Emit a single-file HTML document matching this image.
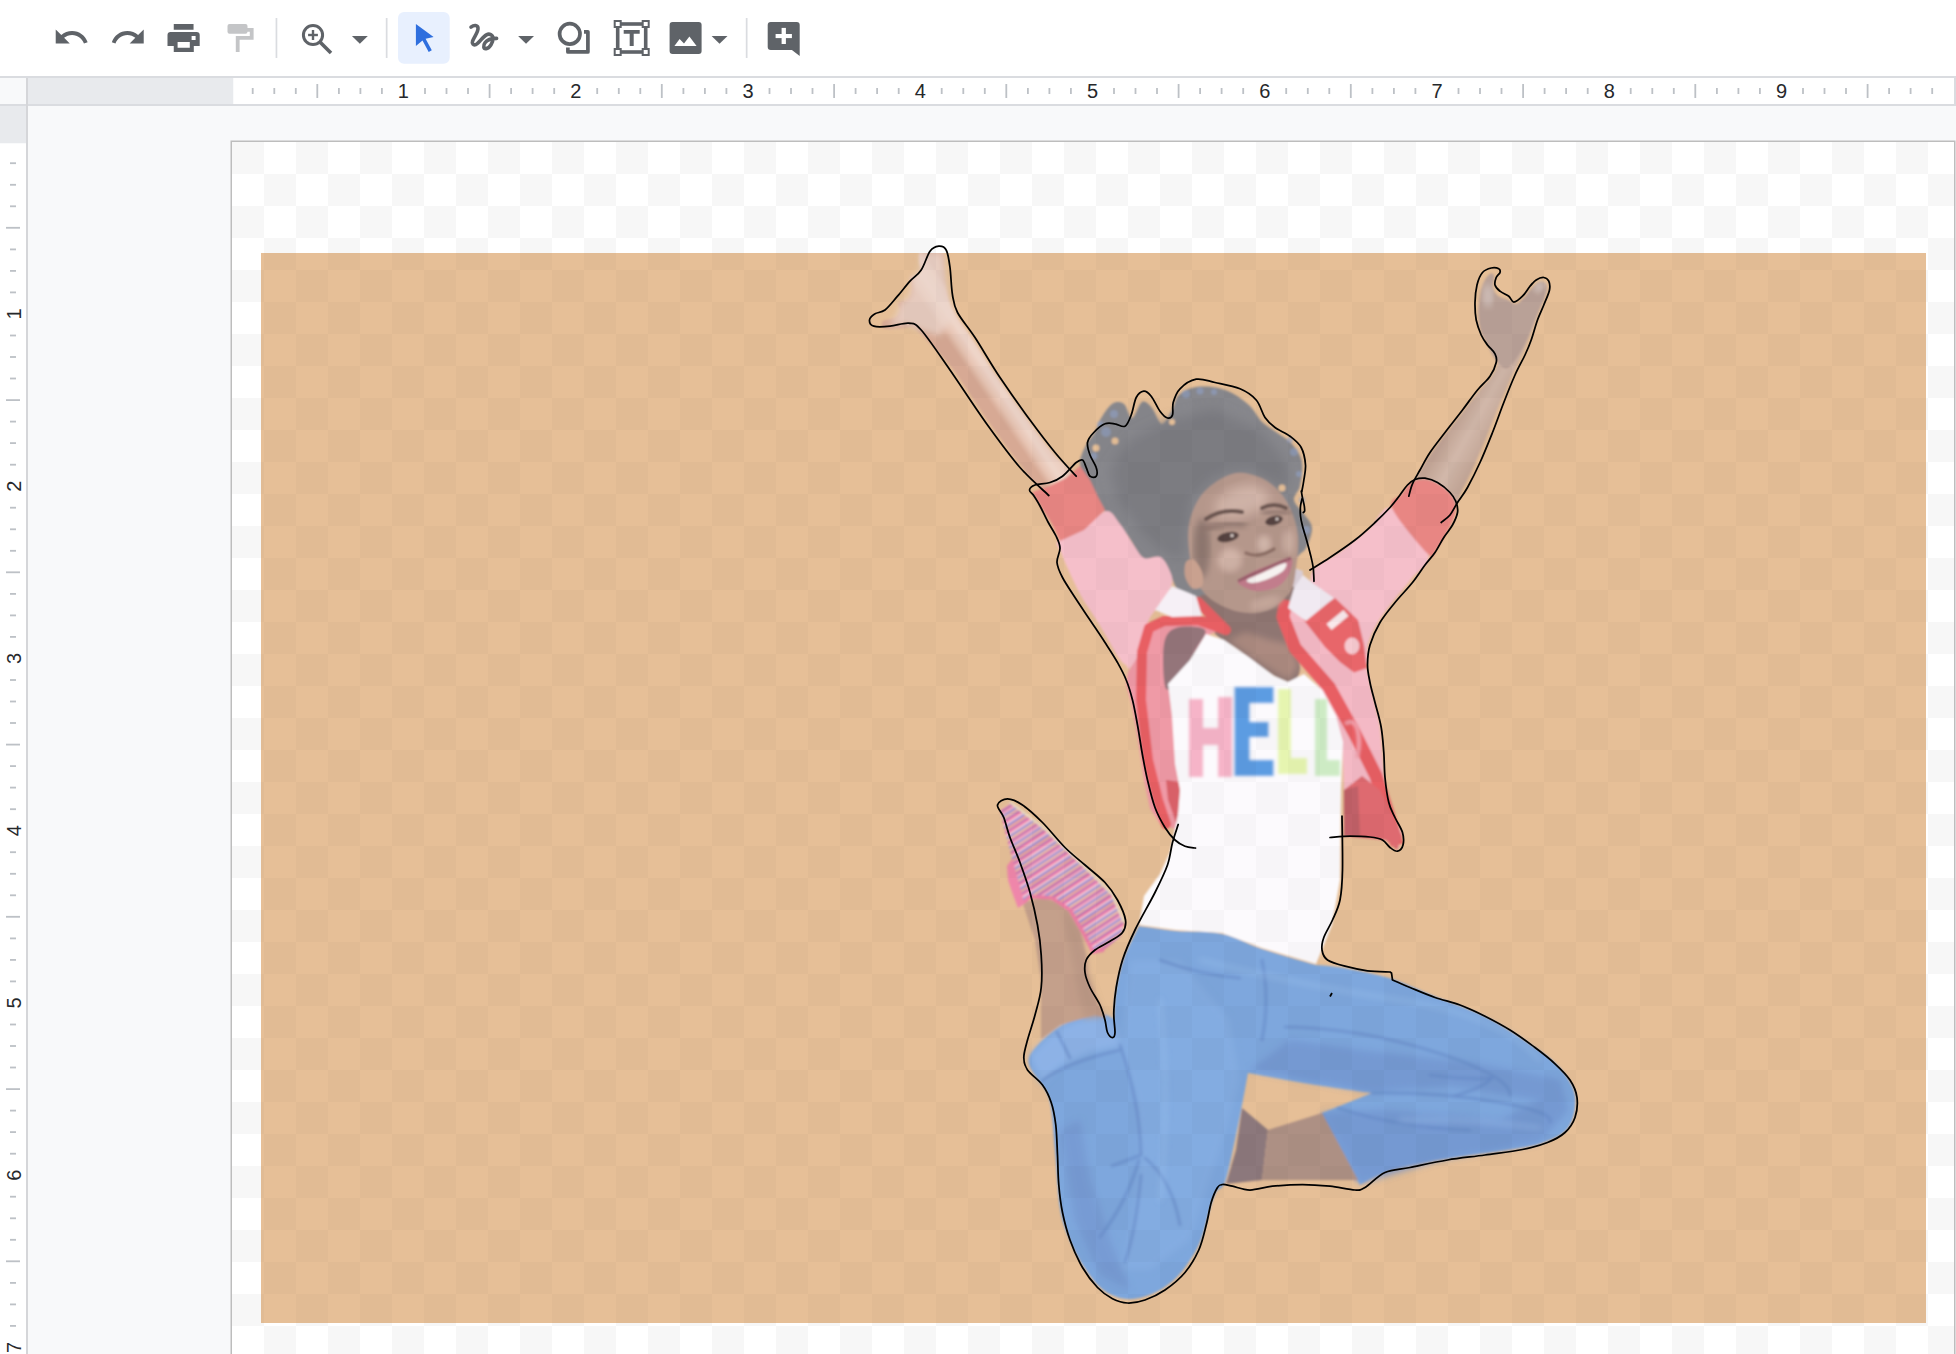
<!DOCTYPE html>
<html><head><meta charset="utf-8"><title>Drawing</title>
<style>
html,body{margin:0;padding:0;background:#fff;}
body{width:1956px;height:1354px;overflow:hidden;position:relative;font-family:"Liberation Sans",sans-serif;}
svg{position:absolute;left:0;top:0;display:block}
text{font-family:"Liberation Sans",sans-serif;}
</style></head><body>
<svg width="1956" height="1354" viewBox="0 0 1956 1354">
<defs>
<pattern id="chk" x="232" y="142" width="64" height="64" patternUnits="userSpaceOnUse">
<rect width="64" height="64" fill="#ffffff"/>
<rect width="32" height="32" fill="#f7f7f7"/><rect x="32" y="32" width="32" height="32" fill="#f7f7f7"/>
</pattern>
<pattern id="chk2" x="232" y="142" width="64" height="64" patternUnits="userSpaceOnUse">
<rect width="32" height="32" fill="#000" fill-opacity="0.019"/><rect x="32" y="32" width="32" height="32" fill="#000" fill-opacity="0.019"/>
</pattern>
</defs>
<!-- workspace bg -->
<rect x="0" y="0" width="1956" height="1354" fill="#ffffff"/>
<rect x="27" y="105" width="1929" height="1249" fill="#f8f9fa"/>
<!-- top ruler -->
<rect x="0" y="76" width="1956" height="2" fill="#dadce0"/>
<rect x="0" y="104" width="1956" height="2" fill="#dadce0"/>
<rect x="0" y="78" width="26" height="26" fill="#f8f9fa"/>
<rect x="27" y="78" width="206.5" height="26" fill="#e8eaed"/>
<rect x="233.5" y="78" width="1720.5" height="26" fill="#ffffff"/>
<rect x="1954" y="78" width="2" height="26" fill="#dadce0"/>
<rect x="251.8" y="88" width="1.8" height="6" fill="#bdc1c6"/>
<rect x="273.4" y="88" width="1.8" height="6" fill="#bdc1c6"/>
<rect x="294.9" y="88" width="1.8" height="6" fill="#bdc1c6"/>
<rect x="316.4" y="84" width="1.8" height="14" fill="#bdc1c6"/>
<rect x="338.0" y="88" width="1.8" height="6" fill="#bdc1c6"/>
<rect x="359.5" y="88" width="1.8" height="6" fill="#bdc1c6"/>
<rect x="381.0" y="88" width="1.8" height="6" fill="#bdc1c6"/>
<text x="403.4" y="98" text-anchor="middle" font-size="20" fill="#26282b">1</text>
<rect x="424.1" y="88" width="1.8" height="6" fill="#bdc1c6"/>
<rect x="445.6" y="88" width="1.8" height="6" fill="#bdc1c6"/>
<rect x="467.1" y="88" width="1.8" height="6" fill="#bdc1c6"/>
<rect x="488.7" y="84" width="1.8" height="14" fill="#bdc1c6"/>
<rect x="510.2" y="88" width="1.8" height="6" fill="#bdc1c6"/>
<rect x="531.7" y="88" width="1.8" height="6" fill="#bdc1c6"/>
<rect x="553.3" y="88" width="1.8" height="6" fill="#bdc1c6"/>
<text x="575.7" y="98" text-anchor="middle" font-size="20" fill="#26282b">2</text>
<rect x="596.3" y="88" width="1.8" height="6" fill="#bdc1c6"/>
<rect x="617.9" y="88" width="1.8" height="6" fill="#bdc1c6"/>
<rect x="639.4" y="88" width="1.8" height="6" fill="#bdc1c6"/>
<rect x="660.9" y="84" width="1.8" height="14" fill="#bdc1c6"/>
<rect x="682.5" y="88" width="1.8" height="6" fill="#bdc1c6"/>
<rect x="704.0" y="88" width="1.8" height="6" fill="#bdc1c6"/>
<rect x="725.5" y="88" width="1.8" height="6" fill="#bdc1c6"/>
<text x="748.0" y="98" text-anchor="middle" font-size="20" fill="#26282b">3</text>
<rect x="768.6" y="88" width="1.8" height="6" fill="#bdc1c6"/>
<rect x="790.1" y="88" width="1.8" height="6" fill="#bdc1c6"/>
<rect x="811.6" y="88" width="1.8" height="6" fill="#bdc1c6"/>
<rect x="833.2" y="84" width="1.8" height="14" fill="#bdc1c6"/>
<rect x="854.7" y="88" width="1.8" height="6" fill="#bdc1c6"/>
<rect x="876.2" y="88" width="1.8" height="6" fill="#bdc1c6"/>
<rect x="897.8" y="88" width="1.8" height="6" fill="#bdc1c6"/>
<text x="920.2" y="98" text-anchor="middle" font-size="20" fill="#26282b">4</text>
<rect x="940.8" y="88" width="1.8" height="6" fill="#bdc1c6"/>
<rect x="962.4" y="88" width="1.8" height="6" fill="#bdc1c6"/>
<rect x="983.9" y="88" width="1.8" height="6" fill="#bdc1c6"/>
<rect x="1005.4" y="84" width="1.8" height="14" fill="#bdc1c6"/>
<rect x="1027.0" y="88" width="1.8" height="6" fill="#bdc1c6"/>
<rect x="1048.5" y="88" width="1.8" height="6" fill="#bdc1c6"/>
<rect x="1070.0" y="88" width="1.8" height="6" fill="#bdc1c6"/>
<text x="1092.5" y="98" text-anchor="middle" font-size="20" fill="#26282b">5</text>
<rect x="1113.1" y="88" width="1.8" height="6" fill="#bdc1c6"/>
<rect x="1134.6" y="88" width="1.8" height="6" fill="#bdc1c6"/>
<rect x="1156.1" y="88" width="1.8" height="6" fill="#bdc1c6"/>
<rect x="1177.7" y="84" width="1.8" height="14" fill="#bdc1c6"/>
<rect x="1199.2" y="88" width="1.8" height="6" fill="#bdc1c6"/>
<rect x="1220.7" y="88" width="1.8" height="6" fill="#bdc1c6"/>
<rect x="1242.3" y="88" width="1.8" height="6" fill="#bdc1c6"/>
<text x="1264.7" y="98" text-anchor="middle" font-size="20" fill="#26282b">6</text>
<rect x="1285.3" y="88" width="1.8" height="6" fill="#bdc1c6"/>
<rect x="1306.9" y="88" width="1.8" height="6" fill="#bdc1c6"/>
<rect x="1328.4" y="88" width="1.8" height="6" fill="#bdc1c6"/>
<rect x="1349.9" y="84" width="1.8" height="14" fill="#bdc1c6"/>
<rect x="1371.5" y="88" width="1.8" height="6" fill="#bdc1c6"/>
<rect x="1393.0" y="88" width="1.8" height="6" fill="#bdc1c6"/>
<rect x="1414.5" y="88" width="1.8" height="6" fill="#bdc1c6"/>
<text x="1437.0" y="98" text-anchor="middle" font-size="20" fill="#26282b">7</text>
<rect x="1457.6" y="88" width="1.8" height="6" fill="#bdc1c6"/>
<rect x="1479.1" y="88" width="1.8" height="6" fill="#bdc1c6"/>
<rect x="1500.6" y="88" width="1.8" height="6" fill="#bdc1c6"/>
<rect x="1522.2" y="84" width="1.8" height="14" fill="#bdc1c6"/>
<rect x="1543.7" y="88" width="1.8" height="6" fill="#bdc1c6"/>
<rect x="1565.2" y="88" width="1.8" height="6" fill="#bdc1c6"/>
<rect x="1586.8" y="88" width="1.8" height="6" fill="#bdc1c6"/>
<text x="1609.2" y="98" text-anchor="middle" font-size="20" fill="#26282b">8</text>
<rect x="1629.8" y="88" width="1.8" height="6" fill="#bdc1c6"/>
<rect x="1651.4" y="88" width="1.8" height="6" fill="#bdc1c6"/>
<rect x="1672.9" y="88" width="1.8" height="6" fill="#bdc1c6"/>
<rect x="1694.4" y="84" width="1.8" height="14" fill="#bdc1c6"/>
<rect x="1716.0" y="88" width="1.8" height="6" fill="#bdc1c6"/>
<rect x="1737.5" y="88" width="1.8" height="6" fill="#bdc1c6"/>
<rect x="1759.0" y="88" width="1.8" height="6" fill="#bdc1c6"/>
<text x="1781.5" y="98" text-anchor="middle" font-size="20" fill="#26282b">9</text>
<rect x="1802.1" y="88" width="1.8" height="6" fill="#bdc1c6"/>
<rect x="1823.6" y="88" width="1.8" height="6" fill="#bdc1c6"/>
<rect x="1845.1" y="88" width="1.8" height="6" fill="#bdc1c6"/>
<rect x="1866.7" y="84" width="1.8" height="14" fill="#bdc1c6"/>
<rect x="1888.2" y="88" width="1.8" height="6" fill="#bdc1c6"/>
<rect x="1909.7" y="88" width="1.8" height="6" fill="#bdc1c6"/>
<rect x="1931.3" y="88" width="1.8" height="6" fill="#bdc1c6"/>
<!-- left ruler -->
<rect x="0" y="106" width="26" height="37.5" fill="#e8eaed"/>
<rect x="0" y="143.5" width="26" height="1210.5" fill="#ffffff"/>
<rect x="26" y="78" width="2" height="1276" fill="#d5d6d9"/>
<rect x="10" y="162.3" width="6" height="1.8" fill="#bdc1c6"/>
<rect x="10" y="183.9" width="6" height="1.8" fill="#bdc1c6"/>
<rect x="10" y="205.4" width="6" height="1.8" fill="#bdc1c6"/>
<rect x="6" y="226.9" width="14" height="1.8" fill="#bdc1c6"/>
<rect x="10" y="248.5" width="6" height="1.8" fill="#bdc1c6"/>
<rect x="10" y="270.0" width="6" height="1.8" fill="#bdc1c6"/>
<rect x="10" y="291.5" width="6" height="1.8" fill="#bdc1c6"/>
<text transform="translate(20.5,313.9) rotate(-90)" text-anchor="middle" font-size="20" fill="#26282b">1</text>
<rect x="10" y="334.6" width="6" height="1.8" fill="#bdc1c6"/>
<rect x="10" y="356.1" width="6" height="1.8" fill="#bdc1c6"/>
<rect x="10" y="377.6" width="6" height="1.8" fill="#bdc1c6"/>
<rect x="6" y="399.2" width="14" height="1.8" fill="#bdc1c6"/>
<rect x="10" y="420.7" width="6" height="1.8" fill="#bdc1c6"/>
<rect x="10" y="442.2" width="6" height="1.8" fill="#bdc1c6"/>
<rect x="10" y="463.8" width="6" height="1.8" fill="#bdc1c6"/>
<text transform="translate(20.5,486.2) rotate(-90)" text-anchor="middle" font-size="20" fill="#26282b">2</text>
<rect x="10" y="506.8" width="6" height="1.8" fill="#bdc1c6"/>
<rect x="10" y="528.4" width="6" height="1.8" fill="#bdc1c6"/>
<rect x="10" y="549.9" width="6" height="1.8" fill="#bdc1c6"/>
<rect x="6" y="571.4" width="14" height="1.8" fill="#bdc1c6"/>
<rect x="10" y="593.0" width="6" height="1.8" fill="#bdc1c6"/>
<rect x="10" y="614.5" width="6" height="1.8" fill="#bdc1c6"/>
<rect x="10" y="636.0" width="6" height="1.8" fill="#bdc1c6"/>
<text transform="translate(20.5,658.5) rotate(-90)" text-anchor="middle" font-size="20" fill="#26282b">3</text>
<rect x="10" y="679.1" width="6" height="1.8" fill="#bdc1c6"/>
<rect x="10" y="700.6" width="6" height="1.8" fill="#bdc1c6"/>
<rect x="10" y="722.1" width="6" height="1.8" fill="#bdc1c6"/>
<rect x="6" y="743.7" width="14" height="1.8" fill="#bdc1c6"/>
<rect x="10" y="765.2" width="6" height="1.8" fill="#bdc1c6"/>
<rect x="10" y="786.7" width="6" height="1.8" fill="#bdc1c6"/>
<rect x="10" y="808.3" width="6" height="1.8" fill="#bdc1c6"/>
<text transform="translate(20.5,830.7) rotate(-90)" text-anchor="middle" font-size="20" fill="#26282b">4</text>
<rect x="10" y="851.3" width="6" height="1.8" fill="#bdc1c6"/>
<rect x="10" y="872.9" width="6" height="1.8" fill="#bdc1c6"/>
<rect x="10" y="894.4" width="6" height="1.8" fill="#bdc1c6"/>
<rect x="6" y="915.9" width="14" height="1.8" fill="#bdc1c6"/>
<rect x="10" y="937.5" width="6" height="1.8" fill="#bdc1c6"/>
<rect x="10" y="959.0" width="6" height="1.8" fill="#bdc1c6"/>
<rect x="10" y="980.5" width="6" height="1.8" fill="#bdc1c6"/>
<text transform="translate(20.5,1003.0) rotate(-90)" text-anchor="middle" font-size="20" fill="#26282b">5</text>
<rect x="10" y="1023.6" width="6" height="1.8" fill="#bdc1c6"/>
<rect x="10" y="1045.1" width="6" height="1.8" fill="#bdc1c6"/>
<rect x="10" y="1066.6" width="6" height="1.8" fill="#bdc1c6"/>
<rect x="6" y="1088.2" width="14" height="1.8" fill="#bdc1c6"/>
<rect x="10" y="1109.7" width="6" height="1.8" fill="#bdc1c6"/>
<rect x="10" y="1131.2" width="6" height="1.8" fill="#bdc1c6"/>
<rect x="10" y="1152.8" width="6" height="1.8" fill="#bdc1c6"/>
<text transform="translate(20.5,1175.2) rotate(-90)" text-anchor="middle" font-size="20" fill="#26282b">6</text>
<rect x="10" y="1195.8" width="6" height="1.8" fill="#bdc1c6"/>
<rect x="10" y="1217.4" width="6" height="1.8" fill="#bdc1c6"/>
<rect x="10" y="1238.9" width="6" height="1.8" fill="#bdc1c6"/>
<rect x="6" y="1260.4" width="14" height="1.8" fill="#bdc1c6"/>
<rect x="10" y="1282.0" width="6" height="1.8" fill="#bdc1c6"/>
<rect x="10" y="1303.5" width="6" height="1.8" fill="#bdc1c6"/>
<rect x="10" y="1325.0" width="6" height="1.8" fill="#bdc1c6"/>
<text transform="translate(20.5,1347.5) rotate(-90)" text-anchor="middle" font-size="20" fill="#26282b">7</text>
<rect x="10" y="1368.1" width="6" height="1.8" fill="#bdc1c6"/>
<!-- canvas -->
<rect x="230.5" y="140.5" width="1725" height="1240" fill="#bdbdbd"/>
<rect x="232" y="142" width="1722" height="1240" fill="url(#chk)"/>
<rect x="261" y="253" width="1665" height="1070" fill="#e6bf97"/>
<defs><filter id="soft" x="-5%" y="-5%" width="110%" height="110%"><feGaussianBlur stdDeviation="1.1"/></filter><filter id="soft3" x="-10%" y="-10%" width="120%" height="120%"><feGaussianBlur stdDeviation="3"/></filter><filter id="soft6" x="-20%" y="-20%" width="140%" height="140%"><feGaussianBlur stdDeviation="6"/></filter><linearGradient id="armL" gradientUnits="userSpaceOnUse" x1="985" y1="395" x2="1010" y2="378"><stop offset="0" stop-color="#d7a994"/><stop offset=".22" stop-color="#e7c4b3"/><stop offset=".5" stop-color="#efd6ca"/><stop offset=".85" stop-color="#ebccbd"/><stop offset="1" stop-color="#dcb4a1"/></linearGradient><linearGradient id="armR" gradientUnits="userSpaceOnUse" x1="1452" y1="425" x2="1488" y2="445"><stop offset="0" stop-color="#c0a394"/><stop offset=".45" stop-color="#d2b8aa"/><stop offset="1" stop-color="#c2a596"/></linearGradient><pattern id="stripes" width="30" height="30" patternUnits="userSpaceOnUse" patternTransform="rotate(-33)"><rect width="30" height="30" fill="#f0729f"/><rect y="0" width="30" height="1.8" fill="#86a2e0"/><rect y="2.600" width="30" height="1.2" fill="#f8eeb0"/><rect y="4.600" width="30" height="1.300" fill="#9a86c8"/><rect y="8.400" width="30" height="1.300" fill="#faf6f6"/><rect y="10.400" width="30" height="1.800" fill="#7d9be0"/><rect y="13.000" width="30" height="1.200" fill="#f4cf90"/><rect y="15.000" width="30" height="1.200" fill="#a88ccc"/><rect y="18.600" width="30" height="1.300" fill="#f9f3f4"/><rect y="20.600" width="30" height="1.700" fill="#7aa6e4"/><rect y="23.000" width="30" height="1.200" fill="#f6eaa6"/><rect y="25.400" width="30" height="1.200" fill="#a08ac8"/><rect y="28.300" width="30" height="1.000" fill="#f7f1f2"/></pattern></defs>
<clipPath id="imgclip"><rect x="261" y="253" width="1665" height="1070"/></clipPath><g clip-path="url(#imgclip)"><g filter="url(#soft)">
<path d="M1092.0,500.0 C1088.0,494.3 1086.0,486.3 1084.0,480.0 C1082.0,473.7 1079.7,467.8 1080.0,462.0 C1080.3,456.2 1083.5,450.0 1086.0,445.0 C1088.5,440.0 1092.7,436.2 1095.0,432.0 C1097.3,427.8 1097.2,424.7 1100.0,420.0 C1102.8,415.3 1108.0,406.7 1112.0,404.0 C1116.0,401.3 1120.7,401.7 1124.0,404.0 C1127.3,406.3 1129.0,418.3 1132.0,418.0 C1135.0,417.7 1138.7,403.7 1142.0,402.0 C1145.3,400.3 1148.7,404.3 1152.0,408.0 C1155.3,411.7 1158.7,423.7 1162.0,424.0 C1165.3,424.3 1169.3,414.7 1172.0,410.0 C1174.7,405.3 1174.7,399.7 1178.0,396.0 C1181.3,392.3 1186.3,389.5 1192.0,388.0 C1197.7,386.5 1205.3,386.2 1212.0,387.0 C1218.7,387.8 1225.7,389.8 1232.0,393.0 C1238.3,396.2 1245.0,401.2 1250.0,406.0 C1255.0,410.8 1257.7,417.7 1262.0,422.0 C1266.3,426.3 1271.0,428.3 1276.0,432.0 C1281.0,435.7 1287.7,439.0 1292.0,444.0 C1296.3,449.0 1300.7,455.0 1302.0,462.0 C1303.3,469.0 1301.3,479.7 1300.0,486.0 C1298.7,492.3 1293.3,495.3 1294.0,500.0 C1294.7,504.7 1301.0,509.3 1304.0,514.0 C1307.0,518.7 1311.7,522.3 1312.0,528.0 C1312.3,533.7 1308.7,542.7 1306.0,548.0 C1303.3,553.3 1300.3,551.3 1296.0,560.0 C1291.7,568.7 1291.0,590.0 1280.0,600.0 C1269.0,610.0 1244.2,620.0 1230.0,620.0 C1215.8,620.0 1203.7,605.0 1195.0,600.0 C1186.3,595.0 1182.5,595.0 1178.0,590.0 C1173.5,585.0 1171.7,575.3 1168.0,570.0 C1164.3,564.7 1160.3,560.0 1156.0,558.0 C1151.7,556.0 1146.7,561.7 1142.0,558.0 C1137.3,554.3 1133.7,543.3 1128.0,536.0 C1122.3,528.7 1114.0,520.0 1108.0,514.0 C1102.0,508.0 1096.0,505.7 1092.0,500.0Z" fill="#87878c" />
<path d="M1110,470 L1130,440 L1170,420 L1215,410 L1260,430 L1285,460 L1290,490 L1250,470 L1215,475 L1190,500 L1185,560 L1165,555 L1140,530 L1118,500z" fill="#7b7b81" filter="url(#soft6)"/>
<circle cx="1106" cy="432" r="5" fill="#8fa3cc" opacity=".55"/>
<circle cx="1114" cy="414" r="4" fill="#8fa3cc" opacity=".55"/>
<circle cx="1100" cy="424" r="3" fill="#8fa3cc" opacity=".55"/>
<circle cx="1186" cy="394" r="4" fill="#8fa3cc" opacity=".55"/>
<circle cx="1200" cy="391" r="3.5" fill="#8fa3cc" opacity=".55"/>
<circle cx="1214" cy="392" r="3" fill="#8fa3cc" opacity=".55"/>
<circle cx="1294" cy="452" r="4" fill="#8fa3cc" opacity=".55"/>
<circle cx="1299" cy="474" r="3" fill="#8fa3cc" opacity=".55"/>
<circle cx="1306" cy="530" r="4" fill="#8fa3cc" opacity=".55"/>
<circle cx="1094" cy="456" r="3.5" fill="#8fa3cc" opacity=".55"/>
<circle cx="1290" cy="440" r="3" fill="#8fa3cc" opacity=".55"/>
<circle cx="1302" cy="500" r="3" fill="#8fa3cc" opacity=".55"/>
<circle cx="1096" cy="448" r="3.5" fill="#e6bf97"/>
<circle cx="1115" cy="441" r="3.5" fill="#e6bf97"/>
<circle cx="1172" cy="422" r="3" fill="#e6bf97"/>
<circle cx="1282" cy="488" r="3.5" fill="#e6bf97"/>
<path d="M1046.0,492.0 C1036.3,489.0 1029.7,475.8 1020.0,464.0 C1010.3,452.2 999.3,437.0 988.0,421.0 C976.7,405.0 962.2,381.5 952.0,368.0 C941.8,354.5 932.0,345.9 926.5,340.0 C921.0,334.1 921.5,334.4 919.0,332.3 C916.5,330.2 914.6,327.7 911.7,327.1 C908.8,326.5 906.0,328.4 901.4,328.6 C896.8,328.9 887.5,329.8 884.4,328.6 C881.3,327.4 881.0,323.1 882.9,321.2 C884.8,319.3 892.7,319.3 895.5,317.5 C898.3,315.7 899.4,312.6 899.9,310.2 C900.4,307.8 897.0,304.7 898.4,302.8 C899.8,300.9 905.8,300.9 908.0,299.0 C910.2,297.1 911.2,294.1 911.7,291.7 C912.2,289.2 911.2,286.8 911.0,284.3 C910.8,281.9 909.0,278.6 910.2,277.0 C911.4,275.4 916.4,275.9 918.3,274.7 C920.1,273.4 921.2,271.6 921.3,269.5 C921.4,267.4 919.0,265.2 919.0,262.0 C919.0,258.8 917.5,252.0 921.3,250.0 C925.1,248.0 938.0,245.5 942.0,250.0 C946.0,254.5 943.9,268.8 945.0,277.0 C946.1,285.2 946.9,292.9 948.6,299.0 C950.3,305.1 951.4,307.4 955.3,313.9 C959.2,320.4 964.9,327.3 972.0,338.0 C979.1,348.7 988.7,364.3 998.0,378.0 C1007.3,391.7 1019.0,407.7 1028.0,420.0 C1037.0,432.3 1043.7,441.7 1052.0,452.0 C1060.3,462.3 1079.0,475.3 1078.0,482.0 C1077.0,488.7 1055.7,495.0 1046.0,492.0Z" fill="url(#armL)" />
<path d="M921,253 L942,253 L948,296 L956,314 L940,336 L920,330 L905,324 L888,326 L897,314 L900,303 L910,296 L911,280 L920,270z" fill="#ebd6cc" opacity=".75" filter="url(#soft3)"/>
<path d="M1410.0,494.0 C1404.0,489.3 1412.3,485.0 1416.0,478.0 C1419.7,471.0 1426.7,459.8 1432.0,452.0 C1437.3,444.2 1442.3,438.3 1448.0,431.0 C1453.7,423.7 1460.7,414.8 1466.0,408.0 C1471.3,401.2 1475.7,395.3 1480.0,390.0 C1484.3,384.7 1489.0,380.7 1492.0,376.0 C1495.0,371.3 1497.7,366.0 1498.0,362.0 C1498.3,358.0 1496.0,355.3 1494.0,352.0 C1492.0,348.7 1488.3,346.0 1486.0,342.0 C1483.7,338.0 1481.3,333.0 1480.0,328.0 C1478.7,323.0 1478.0,317.3 1478.0,312.0 C1478.0,306.7 1479.0,301.0 1480.0,296.0 C1481.0,291.0 1482.3,285.7 1484.0,282.0 C1485.7,278.3 1488.3,275.0 1490.0,274.0 C1491.7,273.0 1493.5,273.7 1494.0,276.0 C1494.5,278.3 1492.3,284.7 1493.0,288.0 C1493.7,291.3 1495.5,294.0 1498.0,296.0 C1500.5,298.0 1505.0,298.7 1508.0,300.0 C1511.0,301.3 1513.3,304.3 1516.0,304.0 C1518.7,303.7 1521.3,300.7 1524.0,298.0 C1526.7,295.3 1529.3,290.7 1532.0,288.0 C1534.7,285.3 1537.7,282.7 1540.0,282.0 C1542.3,281.3 1545.0,282.0 1546.0,284.0 C1547.0,286.0 1547.0,290.0 1546.0,294.0 C1545.0,298.0 1542.3,302.0 1540.0,308.0 C1537.7,314.0 1535.0,322.3 1532.0,330.0 C1529.0,337.7 1525.7,345.7 1522.0,354.0 C1518.3,362.3 1514.0,371.0 1510.0,380.0 C1506.0,389.0 1502.0,398.3 1498.0,408.0 C1494.0,417.7 1490.0,428.3 1486.0,438.0 C1482.0,447.7 1478.0,457.3 1474.0,466.0 C1470.0,474.7 1465.7,483.3 1462.0,490.0 C1458.3,496.7 1460.7,505.3 1452.0,506.0 C1443.3,506.7 1416.0,498.7 1410.0,494.0Z" fill="url(#armR)" />
<path d="M1480.0,296.0 C1480.7,288.7 1482.3,285.7 1484.0,282.0 C1485.7,278.3 1488.3,275.0 1490.0,274.0 C1491.7,273.0 1493.5,273.7 1494.0,276.0 C1494.5,278.3 1492.3,284.7 1493.0,288.0 C1493.7,291.3 1495.5,294.0 1498.0,296.0 C1500.5,298.0 1505.0,298.7 1508.0,300.0 C1511.0,301.3 1513.3,304.3 1516.0,304.0 C1518.7,303.7 1521.3,300.7 1524.0,298.0 C1526.7,295.3 1529.3,290.7 1532.0,288.0 C1534.7,285.3 1537.7,282.7 1540.0,282.0 C1542.3,281.3 1545.0,282.0 1546.0,284.0 C1547.0,286.0 1547.7,288.3 1546.0,294.0 C1544.3,299.7 1539.7,309.3 1536.0,318.0 C1532.3,326.7 1528.7,337.7 1524.0,346.0 C1519.3,354.3 1512.7,365.7 1508.0,368.0 C1503.3,370.3 1499.7,364.3 1496.0,360.0 C1492.3,355.7 1488.7,347.7 1486.0,342.0 C1483.3,336.3 1481.0,333.7 1480.0,326.0 C1479.0,318.3 1479.3,303.3 1480.0,296.0Z" fill="#b9a197" />
<ellipse cx="1539" cy="287" rx="4" ry="6" fill="#d9c8c2" filter="url(#soft3)" transform="rotate(35 1539 287)"/>
<ellipse cx="1488" cy="296" rx="5" ry="12" fill="#cdbcb6" filter="url(#soft3)"/>
<path d="M1058.0,541.0 C1061.5,537.3 1074.0,535.0 1082.0,530.0 C1090.0,525.0 1099.7,512.0 1106.0,511.0 C1112.3,510.0 1115.5,518.5 1120.0,524.0 C1124.5,529.5 1129.0,538.3 1133.0,544.0 C1137.0,549.7 1139.5,555.8 1144.0,558.0 C1148.5,560.2 1155.8,555.2 1160.0,557.0 C1164.2,558.8 1167.0,564.5 1169.0,569.0 C1171.0,573.5 1173.5,578.2 1172.0,584.0 C1170.5,589.8 1164.0,597.7 1160.0,604.0 C1156.0,610.3 1151.0,614.3 1148.0,622.0 C1145.0,629.7 1145.0,642.3 1142.0,650.0 C1139.0,657.7 1132.7,665.5 1130.0,668.0 C1127.3,670.5 1127.8,666.7 1126.0,665.0 C1124.2,663.3 1123.7,665.1 1119.0,658.0 C1114.3,650.9 1104.2,632.5 1098.0,622.4 C1091.8,612.3 1087.0,606.5 1082.0,597.6 C1077.0,588.7 1071.5,576.6 1068.0,569.0 C1064.5,561.4 1062.7,556.7 1061.0,552.0 C1059.3,547.3 1054.5,544.7 1058.0,541.0Z" fill="#f5bfca" />
<path d="M1032.0,492.0 L1050.0,486.0 L1066.0,478.0 L1080.0,466.0 L1090.0,480.0 L1098.0,497.0 L1105.0,510.0 L1084.0,530.0 L1060.0,541.0 L1052.0,524.0 L1042.0,508.0Z" fill="#e88683" />
<path d="M1312.0,572.0 C1315.7,564.0 1330.7,559.0 1340.0,552.0 C1349.3,545.0 1359.3,537.3 1368.0,530.0 C1376.7,522.7 1382.0,504.0 1392.0,508.0 C1402.0,512.0 1424.7,542.3 1428.0,554.0 C1431.3,565.7 1417.7,570.3 1412.0,578.0 C1406.3,585.7 1399.7,592.7 1394.0,600.0 C1388.3,607.3 1382.3,614.7 1378.0,622.0 C1373.7,629.3 1370.0,637.0 1368.0,644.0 C1366.0,651.0 1370.7,664.7 1366.0,664.0 C1361.3,663.3 1348.0,650.7 1340.0,640.0 C1332.0,629.3 1322.7,611.3 1318.0,600.0 C1313.3,588.7 1308.3,580.0 1312.0,572.0Z" fill="#f5bfca" />
<path d="M1392.0,508.0 C1387.7,498.0 1398.7,498.3 1402.0,494.0 C1405.3,489.7 1407.7,484.3 1412.0,482.0 C1416.3,479.7 1422.7,479.0 1428.0,480.0 C1433.3,481.0 1439.7,484.7 1444.0,488.0 C1448.3,491.3 1452.2,495.7 1454.0,500.0 C1455.8,504.3 1456.3,508.3 1455.0,514.0 C1453.7,519.7 1449.2,528.0 1446.0,534.0 C1442.8,540.0 1439.0,546.7 1436.0,550.0 C1433.0,553.3 1435.3,561.0 1428.0,554.0 C1420.7,547.0 1396.3,518.0 1392.0,508.0Z" fill="#e88683" />
<path d="M1288.0,566.0 L1303.0,571.0 L1301.0,602.0 L1290.0,608.0Z" fill="#ddd2da" />
<path d="M1200.0,596.0 C1202.7,591.0 1218.3,601.3 1230.0,602.0 C1241.7,602.7 1259.2,602.3 1270.0,600.0 C1280.8,597.7 1291.3,581.3 1295.0,588.0 C1298.7,594.7 1291.2,626.7 1292.0,640.0 C1292.8,653.3 1300.3,661.0 1300.0,668.0 C1299.7,675.0 1296.3,682.0 1290.0,682.0 C1283.7,682.0 1271.0,673.7 1262.0,668.0 C1253.0,662.3 1244.0,654.0 1236.0,648.0 C1228.0,642.0 1220.0,640.7 1214.0,632.0 C1208.0,623.3 1197.3,601.0 1200.0,596.0Z" fill="#8f7672" />
<path d="M1228,640 L1262,664 L1288,680 L1298,666 L1290,644 L1270,640 L1246,632z" fill="#ac8a80" filter="url(#soft3)"/>
<path d="M1170.0,684.0 L1204.0,636.0 L1222.0,640.0 L1206.0,660.0 L1190.0,680.0 L1168.0,700.0Z" fill="#9a7878" />
<path d="M1142.0,650.0 L1148.0,624.0 L1164.0,616.0 L1200.0,616.0 L1224.0,628.0 L1206.0,636.0 L1170.0,684.0 L1174.0,730.0 L1178.0,780.0 L1184.0,806.0 L1178.0,830.0 L1160.0,824.0 L1150.0,808.0 L1144.0,780.0 L1138.0,740.0 L1132.0,706.0 L1126.0,684.0 L1128.0,672.0Z" fill="#ef9aa6" />
<path d="M1198,602 L1226,630 L1198,620 L1164,621 L1149,628 L1142,652 L1141,700 L1148,760 L1158,800 L1166,824" fill="none" stroke="#e85e63" stroke-width="10" stroke-linejoin="round" stroke-linecap="round"/>
<path d="M1168,800 L1178,828 L1184,806 L1180,782 L1166,780 Z" fill="#d86068"/>
<path d="M1288.0,608.0 L1306.0,620.0 L1334.0,596.0 L1318.0,600.0 L1340.0,640.0 L1366.0,664.0 L1370.0,684.0 L1380.0,726.0 L1384.0,776.0 L1390.0,806.0 L1402.0,834.0 L1398.0,850.0 L1386.0,840.0 L1344.0,836.0 L1344.0,790.0 L1342.0,740.0 L1334.0,712.0 L1320.0,688.0 L1300.0,660.0 L1288.0,636.0Z" fill="#f4b9c5" />
<path d="M1303.0,619.0 L1335.0,598.0 L1358.0,620.0 L1364.0,645.0 L1367.0,668.0 L1354.0,672.5 L1340.0,662.0 L1325.0,647.0Z" fill="#e8666a" />
<path d="M1329,627 L1346,613" stroke="#f9e9ec" stroke-width="8" fill="none"/>
<ellipse cx="1352" cy="646" rx="7.5" ry="8.5" fill="#f6c9d0"/>
<path d="M1286,600 L1283,617 L1295,648 L1329,687 L1355,734 L1376,776 L1389,817 L1397,845" fill="none" stroke="#e85e63" stroke-width="13" stroke-linejoin="round"/>
<path d="M1344.0,790.0 L1362.0,776.0 L1380.0,790.0 L1390.0,810.0 L1402.0,836.0 L1397.0,850.0 L1386.0,840.0 L1344.0,836.0Z" fill="#de6a70" />
<path d="M1344.0,790.0 L1358.0,786.0 L1360.0,836.0 L1344.0,836.0Z" fill="#c06068" />
<path d="M1155.0,610.0 L1172.0,586.0 L1196.0,596.0 L1202.0,616.0 L1172.0,617.0Z" fill="#f6f0f6" />
<path d="M1294.0,588.0 L1303.0,575.0 L1314.0,584.0 L1334.0,598.0 L1306.0,621.0 L1288.0,608.0Z" fill="#f1eaf2" />
<path d="M1232.0,474.0 C1240.7,471.3 1248.7,473.7 1256.0,476.0 C1263.3,478.3 1270.3,482.7 1276.0,488.0 C1281.7,493.3 1286.3,500.0 1290.0,508.0 C1293.7,516.0 1297.0,526.0 1298.0,536.0 C1299.0,546.0 1297.3,558.7 1296.0,568.0 C1294.7,577.3 1294.7,585.0 1290.0,592.0 C1285.3,599.0 1276.3,606.7 1268.0,610.0 C1259.7,613.3 1249.3,613.7 1240.0,612.0 C1230.7,610.3 1219.3,605.3 1212.0,600.0 C1204.7,594.7 1199.8,588.3 1196.0,580.0 C1192.2,571.7 1190.0,560.0 1189.0,550.0 C1188.0,540.0 1187.5,529.7 1190.0,520.0 C1192.5,510.3 1197.0,499.7 1204.0,492.0 C1211.0,484.3 1223.3,476.7 1232.0,474.0Z" fill="#b5978b" />
<ellipse cx="1242" cy="502" rx="28" ry="15" fill="#d3b6aa" filter="url(#soft6)" transform="rotate(-18 1242 502)"/>
<ellipse cx="1230" cy="560" rx="12" ry="12" fill="#d2b4a8" filter="url(#soft3)"/>
<ellipse cx="1264" cy="544" rx="7" ry="9" fill="#d6baae" filter="url(#soft3)"/>
<ellipse cx="1288" cy="542" rx="6" ry="12" fill="#cbaea2" filter="url(#soft3)"/>
<ellipse cx="1266" cy="603" rx="16" ry="6" fill="#c9ab9f" filter="url(#soft3)" transform="rotate(-15 1266 603)"/>
<ellipse cx="1202" cy="548" rx="8" ry="30" fill="#8f7871" filter="url(#soft3)"/>
<path d="M1204,530 Q1224,520 1246,524" stroke="#8e756d" stroke-width="7" fill="none" filter="url(#soft3)"/>
<path d="M1262,514 Q1276,508 1290,514" stroke="#8e756d" stroke-width="6" fill="none" filter="url(#soft3)"/>
<path d="M1186.0,562.0 C1187.5,559.3 1191.3,558.3 1194.0,560.0 C1196.7,561.7 1200.7,567.7 1202.0,572.0 C1203.3,576.3 1203.7,583.3 1202.0,586.0 C1200.3,588.7 1194.8,589.7 1192.0,588.0 C1189.2,586.3 1186.0,580.3 1185.0,576.0 C1184.0,571.7 1184.5,564.7 1186.0,562.0Z" fill="#c9a18f" />
<ellipse cx="1228" cy="537" rx="11" ry="4.8" fill="#54423f" transform="rotate(-12 1228 537)"/>
<ellipse cx="1274" cy="520.5" rx="9" ry="4.6" fill="#54423f" transform="rotate(-14 1274 520.5)"/>
<circle cx="1232" cy="535.5" r="1.6" fill="#e8dcd8"/><circle cx="1277" cy="519" r="1.5" fill="#e8dcd8"/>
<path d="M1206,519 Q1222,508 1242,512" stroke="#6a5450" stroke-width="4" fill="none" stroke-linecap="round"/>
<path d="M1262,508 Q1274,502 1286,508" stroke="#6a5450" stroke-width="4" fill="none" stroke-linecap="round"/>
<path d="M1246,553 Q1258,559 1274,549" stroke="#8e6f66" stroke-width="3.500" fill="none" stroke-linecap="round"/>
<path d="M1238.0,581.0 C1239.3,578.5 1246.7,574.7 1252.0,572.0 C1257.3,569.3 1263.5,567.3 1270.0,565.0 C1276.5,562.7 1287.8,556.5 1291.0,558.0 C1294.2,559.5 1291.3,569.2 1289.0,574.0 C1286.7,578.8 1282.2,584.2 1277.0,587.0 C1271.8,589.8 1263.5,591.0 1258.0,591.0 C1252.5,591.0 1247.3,588.7 1244.0,587.0 C1240.7,585.3 1236.7,583.5 1238.0,581.0Z" fill="#c27d8c" />
<path d="M1238,581 Q1262,570 1291,558" stroke="#9a5e6c" stroke-width="3" fill="none"/>
<path d="M1247.0,580.0 C1248.5,578.3 1255.7,575.8 1262.0,573.0 C1268.3,570.2 1281.5,563.3 1285.0,563.0 C1288.5,562.7 1285.8,568.3 1283.0,571.0 C1280.2,573.7 1273.0,577.0 1268.0,579.0 C1263.0,581.0 1256.5,582.8 1253.0,583.0 C1249.5,583.2 1245.5,581.7 1247.0,580.0Z" fill="#f6f2f0" />
<path d="M1165.0,686.0 C1163.3,679.3 1162.2,653.7 1164.0,644.0 C1165.8,634.3 1169.2,630.3 1176.0,628.0 C1182.8,625.7 1202.0,626.0 1205.0,630.0 C1208.0,634.0 1199.2,643.0 1194.0,652.0 C1188.8,661.0 1178.8,678.3 1174.0,684.0 C1169.2,689.7 1166.7,692.7 1165.0,686.0Z" fill="#94747a" />
<path d="M1168.0,684.0 L1190.0,660.0 L1206.0,634.0 L1224.0,640.0 L1250.0,658.0 L1274.0,676.0 L1288.0,682.0 L1304.0,674.0 L1322.0,690.0 L1336.0,716.0 L1343.0,742.0 L1341.0,790.0 L1340.0,880.0 L1332.0,925.0 L1316.0,964.0 L1262.0,948.0 L1222.0,933.0 L1176.0,930.0 L1139.0,925.0 L1144.0,896.0 L1160.0,874.0 L1170.0,852.0 L1178.0,814.0 L1180.0,790.0 L1175.0,764.0 L1172.0,716.0Z" fill="#fcfafd" />
<g filter="url(#soft)">
<path d="M1189,699 h14 v29 h15 v-31 h14 v80 h-14 v-32 h-15 v32 h-14z" fill="#f6b4c8"/>
<path d="M1234.5,687 h39 v16 h-24 v19 h19 v15 h-19 v23 h24 v16 h-39z" fill="#5c9ce2"/>
<path d="M1278,689 h13 v69 h16 v16 h-29z" fill="#e6f5b0"/>
<path d="M1315,699 h12 v61 h13 v16 h-25z" fill="#cdebc4"/>
<path d="M1345,724 q8,-6 12,4 q4,14 0,30" stroke="#f0a0ac" stroke-width="4" fill="none"/>
</g>
<path d="M1139.0,926.0 C1145.2,926.8 1162.2,929.7 1176.0,931.0 C1189.8,932.3 1207.7,931.0 1222.0,934.0 C1236.3,937.0 1246.3,943.8 1262.0,949.0 C1277.7,954.2 1307.0,962.3 1316.0,965.0 L1316.0,965.0 C1320.7,965.5 1331.3,965.7 1344.0,968.0 C1356.7,970.3 1376.7,974.2 1392.0,979.0 C1407.3,983.8 1420.3,990.7 1436.0,997.0 C1451.7,1003.3 1469.7,1008.7 1486.0,1017.0 C1502.3,1025.3 1522.0,1038.8 1534.0,1047.0 C1546.0,1055.2 1551.5,1059.2 1558.0,1066.0 C1564.5,1072.8 1570.2,1081.0 1573.0,1088.0 C1575.8,1095.0 1575.8,1101.3 1575.0,1108.0 C1574.2,1114.7 1572.2,1122.7 1568.0,1128.0 C1563.8,1133.3 1558.0,1136.7 1550.0,1140.0 C1542.0,1143.3 1536.7,1145.0 1520.0,1148.0 C1503.3,1151.0 1470.0,1154.8 1450.0,1158.0 C1430.0,1161.2 1412.0,1164.2 1400.0,1167.0 C1388.0,1169.8 1384.7,1172.0 1378.0,1175.0 C1371.3,1178.0 1363.0,1183.3 1360.0,1185.0 L1360.0,1185.0 C1357.0,1179.2 1348.3,1162.0 1342.0,1150.0 C1335.7,1138.0 1325.3,1119.2 1322.0,1113.0 L1322.0,1113.0 L1372.0,1093.0 L1372.0,1093.0 C1361.7,1091.5 1330.7,1087.3 1310.0,1084.0 C1289.3,1080.7 1258.3,1074.8 1248.0,1073.0 L1248.0,1073.0 C1247.2,1077.5 1245.2,1088.8 1243.0,1100.0 C1240.8,1111.2 1238.0,1126.3 1235.0,1140.0 C1232.0,1153.7 1228.2,1173.3 1225.0,1182.0 C1221.8,1190.7 1218.7,1187.0 1216.0,1192.0 C1213.3,1197.0 1211.2,1205.0 1209.0,1212.0 C1206.8,1219.0 1205.5,1227.0 1203.0,1234.0 C1200.5,1241.0 1198.5,1246.7 1194.0,1254.0 C1189.5,1261.3 1183.0,1271.3 1176.0,1278.0 C1169.0,1284.7 1160.3,1290.5 1152.0,1294.0 C1143.7,1297.5 1134.3,1299.8 1126.0,1299.0 C1117.7,1298.2 1109.3,1294.8 1102.0,1289.0 C1094.7,1283.2 1087.7,1272.8 1082.0,1264.0 C1076.3,1255.2 1071.7,1245.3 1068.0,1236.0 C1064.3,1226.7 1062.2,1222.3 1060.0,1208.0 C1057.8,1193.7 1056.7,1167.7 1055.0,1150.0 C1053.3,1132.3 1052.5,1113.3 1050.0,1102.0 C1047.5,1090.7 1041.7,1085.3 1040.0,1082.0 L1040.0,1082.0 C1038.2,1078.0 1026.0,1067.0 1029.0,1058.0 C1032.0,1049.0 1046.8,1035.3 1058.0,1028.0 C1069.2,1020.7 1086.7,1015.5 1096.0,1014.0 C1105.3,1012.5 1111.0,1018.2 1114.0,1019.0 L1114.0,1019.0 C1114.3,1014.2 1114.3,1000.2 1116.0,990.0 C1117.7,979.8 1120.2,968.7 1124.0,958.0 C1127.8,947.3 1136.5,931.3 1139.0,926.0 Z" fill="#7ea7dd" />
<g filter="url(#soft3)">
<path d="M1250,1070 L1372,1092 L1450,1086 L1540,1100 L1500,1120 L1380,1110 L1322,1113 L1342,1150 L1360,1184 L1440,1160 L1540,1142 L1568,1110 L1560,1080 L1480,1064 L1360,1050 L1290,1040z" fill="#7396d0" opacity=".8"/>
<path d="M1030,1056 L1058,1028 L1096,1014 L1114,1020 L1120,1046 L1090,1052 L1060,1066 L1042,1084z" fill="#8db2e6"/>
<path d="M1120,1050 L1136,1100 L1140,1160 L1132,1220 L1120,1270 L1150,1270 L1190,1240 L1220,1150 L1240,1080 L1230,1020 L1180,960 L1130,960z" fill="#86aee2" opacity=".7"/>
<path d="M1060,1130 L1075,1220 L1100,1275 L1130,1290 L1110,1240 L1090,1180 L1080,1120z" fill="#7699d2" opacity=".8"/>
</g>
<g fill="none" stroke="#6486c4" stroke-width="2.2" stroke-linecap="round" opacity=".75" filter="url(#soft)">
<path d="M1120,1045 Q1130,1075 1135,1100 T1141,1155"/>
<path d="M1141,1155 L1112,1166"/>
<path d="M1139,1160 Q1128,1200 1100,1237"/>
<path d="M1141,1175 Q1136,1230 1125,1262"/>
<path d="M1145,1158 Q1172,1180 1180,1225"/>
<path d="M1042,1081 Q1066,1062 1120,1050"/>
<path d="M1057,1032 L1070,1058"/>
<path d="M1285,1027 Q1360,1028 1435,1052 T1510,1095"/>
<path d="M1372,1093 Q1440,1092 1497,1102 T1550,1122"/>
<path d="M1430,1075 Q1470,1080 1490,1078"/>
<path d="M1452,1096 Q1480,1090 1492,1078"/>
<path d="M1322,1114 L1356,1180"/>
<path d="M1338,1108 Q1400,1128 1470,1130"/>
<path d="M1160,960 Q1200,975 1240,978"/>
<path d="M1262,960 Q1270,1000 1262,1040"/>
</g>
<g fill="none" stroke="#9cc0ee" stroke-width="3" stroke-linecap="round" opacity=".7" filter="url(#soft3)">
<path d="M1200,960 Q1300,985 1400,1000 T1540,1060"/>
<path d="M1160,1000 Q1170,1100 1160,1200"/>
<path d="M1400,1120 Q1470,1118 1540,1128"/>
</g>
<path d="M1242.0,1108.0 L1268.0,1130.0 L1262.0,1180.0 L1226.0,1184.0 L1236.0,1150.0Z" fill="#8c787c" />
<path d="M1268.0,1130.0 L1322.0,1113.0 L1358.0,1180.0 L1262.0,1180.0Z" fill="#ad9084" />
<path d="M1022.5,902.5 L1042.5,897.5 L1065.0,905.0 L1080.0,930.0 L1086.0,955.0 L1087.5,975.0 L1096.0,1000.0 L1106.0,1018.0 L1095.0,1015.0 L1060.0,1025.0 L1041.0,1039.0 L1041.0,980.0 L1035.0,940.0Z" fill="#c4a08b" />
<path d="M1062,906 L1080,932 L1086,956 L1088,976 L1096,1000 L1104,1016 L1084,1018 L1072,960z" fill="#bb9885" filter="url(#soft3)"/>
<path d="M1007,866 L1013,858 L1020,880 L1027,902 L1018,908 L1012,892 L1008,880z" fill="#ef86aa"/>
<path d="M1000.0,809.0 L1010.0,802.0 L1044.0,828.0 L1086.0,868.0 L1112.0,894.0 L1124.0,922.0 L1121.0,936.0 L1104.0,950.0 L1092.0,952.0 L1084.0,934.0 L1070.0,910.0 L1052.0,898.0 L1030.0,896.0 L1024.0,902.0 L1018.0,880.0 L1010.0,850.0 L1004.0,828.0Z" fill="url(#stripes)" />
<path d="M1024,902 L1030,896.5 L1052,898 L1070,910 L1084,934 L1093,952 L1104,950" stroke="#ee7fa6" stroke-width="3.5" fill="none" stroke-linejoin="round"/>
<path d="M1010,802 L1044,828 L1086,868 L1112,894 L1124,922" stroke="#ecdcc0" stroke-width="2.5" fill="none" stroke-linejoin="round"/>
</g></g>
<rect x="261" y="253" width="1665" height="1070" fill="url(#chk2)"/>
<path d="M1048.8,495.5 C1044.0,490.8 1030.2,479.2 1020.0,467.5 C1009.8,455.8 999.2,441.2 987.5,425.0 C975.8,408.8 961.0,385.8 950.0,370.0 C939.0,354.2 928.1,337.8 921.2,330.0 C914.4,322.2 914.0,323.9 908.8,323.2 C903.5,322.6 895.8,325.8 890.0,326.2 C884.2,326.8 877.2,327.3 873.8,326.2 C870.3,325.2 869.3,322.1 869.5,320.0 C869.7,317.9 872.4,315.4 875.0,313.8 C877.6,312.1 881.2,312.9 885.0,310.0 C888.8,307.1 893.3,301.0 897.5,296.2 C901.7,291.5 906.0,285.6 910.0,281.2 C914.0,276.9 917.9,275.0 921.2,270.0 C924.6,265.0 927.1,255.2 930.0,251.2 C932.9,247.3 936.0,246.5 938.8,246.2 C941.5,246.0 944.4,246.5 946.2,250.0 C948.1,253.5 949.0,260.0 950.0,267.5 C951.0,275.0 951.2,287.5 952.5,295.0 C953.8,302.5 953.8,305.4 957.5,312.5 C961.2,319.6 967.9,326.7 975.0,337.5 C982.1,348.3 990.8,363.8 1000.0,377.5 C1009.2,391.2 1020.8,407.5 1030.0,420.0 C1039.2,432.5 1047.3,443.1 1055.0,452.5 C1062.7,461.9 1072.7,472.3 1076.2,476.2" fill="none" stroke="#000" stroke-width="1.75" stroke-linecap="round" stroke-linejoin="round" />
<path d="M1195.5,848.0 C1193.8,847.7 1188.4,847.6 1185.0,846.2 C1181.6,844.9 1178.3,843.1 1175.0,840.0 C1171.7,836.9 1168.3,832.9 1165.0,827.5 C1161.7,822.1 1157.9,815.4 1155.0,807.5 C1152.1,799.6 1149.6,788.8 1147.5,780.0 C1145.4,771.2 1144.2,764.2 1142.5,755.0 C1140.8,745.8 1139.2,734.2 1137.5,725.0 C1135.8,715.8 1134.4,707.5 1132.5,700.0 C1130.6,692.5 1128.8,686.2 1126.2,680.0 C1123.8,673.8 1121.0,668.8 1117.5,662.5 C1114.0,656.2 1109.6,649.6 1105.0,642.5 C1100.4,635.4 1095.0,627.5 1090.0,620.0 C1085.0,612.5 1079.6,604.6 1075.0,597.5 C1070.4,590.4 1065.5,583.3 1062.5,577.5 C1059.5,571.7 1057.4,567.4 1057.0,562.5 C1056.6,557.6 1060.2,552.4 1060.0,548.0 C1059.8,543.6 1058.0,540.3 1056.0,536.0 C1054.0,531.7 1050.7,527.0 1048.0,522.0 C1045.3,517.0 1042.3,510.3 1040.0,506.0 C1037.7,501.7 1035.8,498.7 1034.0,496.0 C1032.2,493.3 1029.3,491.8 1029.5,490.0 C1029.7,488.2 1031.6,486.2 1035.0,485.0 C1038.4,483.8 1045.4,484.0 1050.0,482.5 C1054.6,481.0 1058.1,479.6 1062.5,476.2 C1066.9,472.9 1072.9,465.2 1076.2,462.5 C1079.6,459.8 1080.8,459.2 1082.5,460.0 C1084.2,460.8 1085.0,464.8 1086.2,467.5 C1087.5,470.2 1088.3,474.8 1090.0,476.2 C1091.7,477.7 1095.2,477.7 1096.2,476.2 C1097.3,474.8 1097.3,471.0 1096.2,467.5 C1095.2,464.0 1091.5,459.2 1090.0,455.0 C1088.5,450.8 1086.9,446.2 1087.5,442.5 C1088.1,438.8 1090.8,435.6 1093.8,432.5 C1096.7,429.4 1101.5,425.2 1105.0,423.8 C1108.5,422.3 1111.7,423.3 1115.0,423.8 C1118.3,424.2 1122.3,427.7 1125.0,426.2 C1127.7,424.8 1129.4,419.8 1131.2,415.0 C1133.1,410.2 1134.2,401.5 1136.2,397.5 C1138.3,393.5 1141.2,391.5 1143.8,391.2 C1146.2,391.0 1148.5,392.9 1151.2,396.2 C1154.0,399.6 1157.3,407.6 1160.0,411.2 C1162.7,414.9 1165.4,417.4 1167.5,418.0 C1169.6,418.6 1171.5,417.6 1172.5,415.0 C1173.5,412.4 1172.0,406.9 1173.2,402.5 C1174.5,398.1 1176.2,392.6 1180.0,388.8 C1183.8,384.9 1190.4,380.3 1196.2,379.2 C1202.1,378.2 1207.7,380.9 1215.0,382.5 C1222.3,384.1 1233.1,385.8 1240.0,388.8 C1246.9,391.7 1252.1,395.2 1256.2,400.0 C1260.4,404.8 1261.9,412.9 1265.0,417.5 C1268.1,422.1 1270.8,424.4 1275.0,427.5 C1279.2,430.6 1285.6,432.9 1290.0,436.2 C1294.4,439.6 1298.7,442.7 1301.2,447.5 C1303.8,452.3 1305.1,459.4 1305.5,465.0 C1305.9,470.6 1304.3,476.6 1303.7,481.0 C1303.1,485.4 1302.1,489.8 1301.8,491.5" fill="none" stroke="#000" stroke-width="1.75" stroke-linecap="round" stroke-linejoin="round" />
<path d="M1301.3,491.0 C1301.5,492.2 1302.0,495.5 1302.5,498.0 C1303.0,500.5 1304.0,503.8 1304.3,506.0 C1304.6,508.2 1304.8,509.9 1304.6,511.0 C1304.4,512.1 1303.5,512.2 1303.3,512.5" fill="none" stroke="#000" stroke-width="1.75" stroke-linecap="round" stroke-linejoin="round" />
<path d="M1302.0,499.0 C1301.8,500.2 1300.8,503.2 1300.5,506.0 C1300.2,508.8 1300.2,512.7 1300.5,516.0 C1300.8,519.3 1301.5,521.9 1302.5,526.0 C1303.5,530.1 1305.3,535.5 1306.7,540.5 C1308.1,545.5 1309.7,551.5 1310.8,556.0 C1311.9,560.5 1312.7,563.5 1313.2,567.7 C1313.7,571.9 1313.9,579.0 1314.0,581.3" fill="none" stroke="#000" stroke-width="1.75" stroke-linecap="round" stroke-linejoin="round" />
<path d="M1408.8,496.2 C1409.4,494.2 1410.6,488.1 1412.5,483.8 C1414.4,479.4 1417.1,475.2 1420.0,470.0 C1422.9,464.8 1425.8,458.8 1430.0,452.5 C1434.2,446.2 1439.6,439.6 1445.0,432.5 C1450.4,425.4 1457.1,417.1 1462.5,410.0 C1467.9,402.9 1472.9,395.6 1477.5,390.0 C1482.1,384.4 1486.9,380.8 1490.0,376.2 C1493.1,371.7 1495.4,366.2 1496.2,362.5 C1497.1,358.8 1496.5,356.7 1495.0,353.8 C1493.5,350.8 1489.8,348.1 1487.5,345.0 C1485.2,341.9 1483.1,339.2 1481.2,335.0 C1479.4,330.8 1477.3,325.4 1476.2,320.0 C1475.2,314.6 1474.9,308.3 1475.0,302.5 C1475.1,296.7 1475.8,290.0 1477.0,285.0 C1478.2,280.0 1480.1,275.3 1482.5,272.5 C1484.9,269.7 1488.5,268.6 1491.2,268.0 C1494.0,267.4 1497.3,268.0 1498.8,268.8 C1500.2,269.5 1500.4,271.0 1500.0,272.5 C1499.6,274.0 1497.1,275.4 1496.2,277.5 C1495.4,279.6 1494.4,282.7 1495.0,285.0 C1495.6,287.3 1497.7,289.4 1500.0,291.2 C1502.3,293.1 1506.5,294.5 1508.8,296.2 C1511.0,298.0 1511.5,302.0 1513.8,302.0 C1516.0,302.0 1519.8,298.9 1522.5,296.2 C1525.2,293.6 1527.7,289.0 1530.0,286.2 C1532.3,283.5 1534.0,281.5 1536.2,280.0 C1538.5,278.5 1541.7,277.3 1543.8,277.5 C1545.8,277.7 1547.8,279.2 1548.8,281.2 C1549.7,283.3 1550.3,286.0 1549.5,290.0 C1548.7,294.0 1545.8,300.0 1543.8,305.0 C1541.8,310.0 1539.6,314.2 1537.5,320.0 C1535.4,325.8 1533.3,334.2 1531.2,340.0 C1529.2,345.8 1527.7,349.2 1525.0,355.0 C1522.3,360.8 1518.5,367.1 1515.0,375.0 C1511.5,382.9 1507.5,392.9 1503.8,402.5 C1500.0,412.1 1496.5,422.5 1492.5,432.5 C1488.5,442.5 1484.2,453.3 1480.0,462.5 C1475.8,471.7 1471.2,480.8 1467.5,487.5 C1463.8,494.2 1460.4,497.9 1457.5,502.5 C1454.6,507.1 1452.7,511.7 1450.0,515.0 C1447.3,518.3 1442.7,521.2 1441.2,522.5" fill="none" stroke="#000" stroke-width="1.75" stroke-linecap="round" stroke-linejoin="round" />
<path d="M1310.0,570.0 C1313.3,567.9 1322.5,562.5 1330.0,557.5 C1337.5,552.5 1347.5,545.8 1355.0,540.0 C1362.5,534.2 1369.2,527.9 1375.0,522.5 C1380.8,517.1 1385.8,512.1 1390.0,507.5 C1394.2,502.9 1397.1,498.8 1400.0,495.0 C1402.9,491.2 1405.0,487.6 1407.5,485.0 C1410.0,482.4 1412.1,480.6 1415.0,479.5 C1417.9,478.4 1421.2,477.8 1425.0,478.2 C1428.8,478.8 1433.3,480.1 1437.5,482.5 C1441.7,484.9 1446.9,489.2 1450.0,492.5 C1453.1,495.8 1455.0,499.2 1456.2,502.5 C1457.5,505.8 1458.1,508.8 1457.5,512.5 C1456.9,516.2 1454.8,520.8 1452.5,525.0 C1450.2,529.2 1446.7,532.9 1443.8,537.5 C1440.8,542.1 1438.1,547.9 1435.0,552.5 C1431.9,557.1 1428.8,560.0 1425.0,565.0 C1421.2,570.0 1417.5,576.2 1412.5,582.5 C1407.5,588.8 1400.4,595.8 1395.0,602.5 C1389.6,609.2 1384.2,615.4 1380.0,622.5 C1375.8,629.6 1372.1,637.9 1370.0,645.0 C1367.9,652.1 1367.5,658.8 1367.5,665.0 C1367.5,671.2 1368.8,676.2 1370.0,682.5 C1371.2,688.8 1373.1,695.0 1375.0,702.5 C1376.9,710.0 1379.8,719.2 1381.2,727.5 C1382.7,735.8 1383.1,744.2 1383.8,752.5 C1384.4,760.8 1384.2,769.2 1385.0,777.5 C1385.8,785.8 1387.1,795.8 1388.8,802.5 C1390.4,809.2 1392.7,812.5 1395.0,817.5 C1397.3,822.5 1401.2,827.9 1402.5,832.5 C1403.8,837.1 1403.8,841.9 1403.0,845.0 C1402.2,848.1 1399.7,850.8 1397.5,851.2 C1395.3,851.7 1392.5,849.4 1390.0,847.5 C1387.5,845.6 1385.8,841.8 1382.5,840.0 C1379.2,838.2 1375.4,837.6 1370.0,837.0 C1364.6,836.4 1356.7,836.2 1350.0,836.2 C1343.3,836.3 1333.3,837.3 1330.0,837.5" fill="none" stroke="#000" stroke-width="1.75" stroke-linecap="round" stroke-linejoin="round" />
<path d="M1178.2,824.5 C1177.3,827.5 1174.3,835.8 1172.5,842.5 C1170.7,849.2 1170.4,856.7 1167.5,865.0 C1164.6,873.3 1160.4,881.7 1155.0,892.5 C1149.6,903.3 1140.4,918.8 1135.0,930.0 C1129.6,941.2 1125.6,950.4 1122.5,960.0 C1119.4,969.6 1117.7,978.8 1116.2,987.5 C1114.8,996.2 1114.0,1005.0 1113.8,1012.5 C1113.5,1020.0 1115.2,1028.3 1115.0,1032.5 C1114.8,1036.7 1113.8,1037.5 1112.5,1037.5 C1111.2,1037.5 1108.8,1035.4 1107.5,1032.5 C1106.2,1029.6 1106.2,1024.6 1105.0,1020.0 C1103.8,1015.4 1102.5,1010.4 1100.0,1005.0 C1097.5,999.6 1092.5,992.9 1090.0,987.5 C1087.5,982.1 1085.6,977.1 1085.0,972.5 C1084.4,967.9 1084.6,963.8 1086.2,960.0 C1087.9,956.2 1091.0,953.1 1095.0,950.0 C1099.0,946.9 1105.4,944.2 1110.0,941.2 C1114.6,938.3 1119.9,936.0 1122.5,932.5 C1125.1,929.0 1126.3,925.4 1125.5,920.0 C1124.7,914.6 1120.9,906.2 1117.5,900.0 C1114.1,893.8 1110.4,888.3 1105.0,882.5 C1099.6,876.7 1091.7,870.8 1085.0,865.0 C1078.3,859.2 1072.1,854.6 1065.0,847.5 C1057.9,840.4 1049.6,829.6 1042.5,822.5 C1035.4,815.4 1028.3,809.0 1022.5,805.0 C1016.7,801.0 1011.7,798.8 1007.5,798.8 C1003.3,798.8 998.1,801.9 997.5,805.0 C996.9,808.1 1001.7,812.1 1003.8,817.5 C1005.8,822.9 1007.3,830.0 1010.0,837.5 C1012.7,845.0 1016.7,853.3 1020.0,862.5 C1023.3,871.7 1027.1,882.1 1030.0,892.5 C1032.9,902.9 1035.6,914.6 1037.5,925.0 C1039.4,935.4 1040.6,944.6 1041.2,955.0 C1041.9,965.4 1042.3,977.5 1041.2,987.5 C1040.2,997.5 1037.3,1006.2 1035.0,1015.0 C1032.7,1023.8 1029.4,1032.9 1027.5,1040.0 C1025.6,1047.1 1023.8,1052.5 1023.8,1057.5 C1023.8,1062.5 1024.4,1065.4 1027.5,1070.0 C1030.6,1074.6 1038.5,1079.6 1042.5,1085.0 C1046.5,1090.4 1049.0,1095.8 1051.2,1102.5 C1053.5,1109.2 1054.7,1116.2 1055.8,1125.0 C1056.8,1133.8 1057.0,1145.0 1057.5,1155.0 C1058.0,1165.0 1057.9,1175.4 1058.8,1185.0 C1059.6,1194.6 1060.6,1203.3 1062.5,1212.5 C1064.4,1221.7 1066.7,1230.8 1070.0,1240.0 C1073.3,1249.2 1077.9,1259.6 1082.5,1267.5 C1087.1,1275.4 1092.5,1282.3 1097.5,1287.5 C1102.5,1292.7 1107.5,1296.2 1112.5,1298.8 C1117.5,1301.3 1122.1,1302.8 1127.5,1303.0 C1132.9,1303.2 1138.8,1302.2 1145.0,1300.0 C1151.2,1297.8 1158.3,1294.6 1165.0,1290.0 C1171.7,1285.4 1179.4,1279.2 1185.0,1272.5 C1190.6,1265.8 1195.2,1257.9 1198.8,1250.0 C1202.3,1242.1 1204.2,1232.9 1206.2,1225.0 C1208.3,1217.1 1209.4,1208.8 1211.2,1202.5 C1213.1,1196.2 1215.6,1190.5 1217.5,1187.5 C1219.4,1184.5 1220.0,1184.7 1222.5,1184.5 C1225.0,1184.3 1227.9,1185.3 1232.5,1186.2 C1237.1,1187.2 1243.3,1190.0 1250.0,1190.0 C1256.7,1190.0 1263.8,1187.2 1272.5,1186.2 C1281.2,1185.3 1292.9,1184.5 1302.5,1184.5 C1312.1,1184.5 1321.2,1185.3 1330.0,1186.2 C1338.8,1187.2 1349.2,1189.8 1355.0,1190.0 C1360.8,1190.2 1360.0,1190.4 1365.0,1187.5 C1370.0,1184.6 1377.5,1175.8 1385.0,1172.5 C1392.5,1169.2 1399.6,1169.6 1410.0,1167.5 C1420.4,1165.4 1435.0,1162.1 1447.5,1160.0 C1460.0,1157.9 1472.5,1156.8 1485.0,1155.0 C1497.5,1153.2 1512.1,1151.6 1522.5,1149.5 C1532.9,1147.4 1540.4,1145.3 1547.5,1142.5 C1554.6,1139.7 1560.4,1136.7 1565.0,1132.5 C1569.6,1128.3 1573.0,1123.3 1575.0,1117.5 C1577.0,1111.7 1577.8,1103.8 1577.0,1097.5 C1576.2,1091.2 1573.7,1085.6 1570.0,1080.0 C1566.3,1074.4 1560.8,1069.2 1555.0,1063.8 C1549.2,1058.3 1542.5,1053.1 1535.0,1047.5 C1527.5,1041.9 1518.3,1035.2 1510.0,1030.0 C1501.7,1024.8 1493.3,1020.4 1485.0,1016.2 C1476.7,1012.1 1468.3,1008.1 1460.0,1005.0 C1451.7,1001.9 1443.3,1000.4 1435.0,997.5 C1426.7,994.6 1417.1,990.4 1410.0,987.5 C1402.9,984.6 1395.4,981.2 1392.5,980.0" fill="none" stroke="#000" stroke-width="1.75" stroke-linecap="round" stroke-linejoin="round" />
<path d="M1392.5,980 L1391.5,973 L1390,972" fill="none" stroke="#000" stroke-width="1.75"/>
<path d="M1390.0,972.0 C1386.2,971.8 1375.0,971.7 1367.5,970.8 C1360.0,969.8 1351.7,968.0 1345.0,966.2 C1338.3,964.5 1331.3,962.7 1327.5,960.0 C1323.7,957.3 1322.6,953.8 1322.0,950.0 C1321.4,946.2 1322.0,942.5 1323.8,937.5 C1325.5,932.5 1329.8,926.2 1332.5,920.0 C1335.2,913.8 1338.3,908.3 1340.0,900.0 C1341.7,891.7 1342.2,884.0 1342.5,870.0 C1342.8,856.0 1342.1,825.2 1342.0,816.2" fill="none" stroke="#000" stroke-width="1.75" stroke-linecap="round" stroke-linejoin="round" />
<path d="M1330,996.5 L1332,993" stroke="#000" stroke-width="1.800" fill="none"/>
<!-- toolbar -->
<g id="toolbar" fill="#5f6368">
<!-- undo -->
<g transform="translate(52.6,18.5) scale(1.56)"><path d="M12.5 8c-2.65 0-5.05.99-6.9 2.6L2 7v9h9l-3.62-3.62c1.39-1.16 3.16-1.88 5.12-1.88 3.54 0 6.55 2.31 7.6 5.5l2.37-.78C21.08 11.03 17.15 8 12.5 8z"/></g>
<!-- redo -->
<g transform="translate(109.4,18.5) scale(1.56)"><path d="M18.4 10.6C16.55 8.99 14.15 8 11.5 8c-4.65 0-8.58 3.03-9.96 7.22L3.9 16c1.05-3.19 4.05-5.5 7.6-5.5 1.95 0 3.73.72 5.12 1.88L13 16h9V7l-3.6 3.6z"/></g>
<!-- print -->
<path d="M173.75 23.9h19.8v5.9h-19.8z M170.6 32h26a3.1 3.1 0 0 1 3.1 3.1v10.9h-5.900v5.900h-20.050v-5.900h-6.250v-10.900a3.100 3.100 0 0 1 3.100 -3.100z M177.600 41.900v5.900h12.200v-5.900z M191.600 35.900v4.100h4v-4.100z" fill-rule="evenodd"/>
<!-- paint format (disabled) -->
<g fill="#c4c5c7"><rect x="227.5" y="24" width="20" height="9.8" rx="2"/><path d="M247 28h6.6v11.8h-14v12.2h-3.8v-16h14v-4.2h-2.8z"/></g>
<!-- separators -->
<rect x="275.6" y="18" width="1.7" height="40" fill="#dadce0"/>
<rect x="385.8" y="18" width="1.7" height="40" fill="#dadce0"/>
<rect x="745.8" y="18" width="1.7" height="40" fill="#dadce0"/>
<!-- zoom -->
<circle cx="313" cy="35" r="9.6" fill="none" stroke="#5f6368" stroke-width="3"/>
<path d="M320.2 42.2L331 53" stroke="#5f6368" stroke-width="3.6" fill="none"/>
<rect x="308.1" y="33.8" width="9.8" height="2.4"/><rect x="311.8" y="30" width="2.4" height="10"/>
<path d="M351.9 35.9h15.9l-7.95 7.9z"/>
<!-- select (active) -->
<rect x="398" y="12" width="51.7" height="51.8" rx="6" fill="#e8f0fe"/>
<path d="M415.9 24v22l6.6-5.6 6.2 11.6 3.1-1.8-6.2-11.4 8-1.7z" fill="#2f6fde"/>
<!-- scribble -->
<path d="M471 27.2c3-2.4 6.6-2.2 7 0.8 0.5 3.5-3.6 8.6-5.4 13 -1 2.6 0.8 4.6 3.2 3.6 3.4-1.4 6.6-7.6 10.6-9.8 3-1.6 6.4 0 6.6 3.4 0.2 4.4-3.6 10-6.800 10.400 -2.800 0.400 -3.200-3 -1.200-5.800 2.200-3.200 6.600-4.400 11.600-4.400" fill="none" stroke="#5f6368" stroke-width="3.6" stroke-linecap="round" stroke-linejoin="round"/>
<path d="M518.1 35.9h15.9l-7.95 7.9z"/>
<!-- shapes -->
<circle cx="569.8" cy="33.9" r="10.2" fill="none" stroke="#5f6368" stroke-width="3.7"/>
<path d="M584 31.8h3.9v20.1h-20v-4.300" fill="none" stroke="#5f6368" stroke-width="3.7" stroke-linejoin="round"/>
<!-- text box -->
<g fill="none" stroke="#5f6368" stroke-width="3.6"><rect x="617.7" y="24" width="28" height="28"/></g>
<g fill="#fff" stroke="#5f6368" stroke-width="2"><rect x="614.700" y="21" width="6" height="6"/><rect x="642.700" y="21" width="6" height="6"/><rect x="614.700" y="49" width="6" height="6"/><rect x="642.700" y="49" width="6" height="6"/></g>
<path d="M623.7 30h16v3.800h-6v12.100h-4v-12.100h-6z"/>
<!-- image -->
<rect x="669.6" y="21.900" width="32" height="32" rx="3"/>
<path d="M674.400 46l5.200-7 4.400 4.500 5.400-6.900 7.200 9.400z" fill="#fff"/>
<path d="M711.600 35.900h15.900l-7.950 7.900z"/>
<!-- comment -->
<path d="M770.700 21.900h26a3 3 0 0 1 3 3v31l-7.800-5.900h-21.200a3 3 0 0 1 -3-3v-22.100a3 3 0 0 1 3-3z"/>
<rect x="775.600" y="34" width="16.300" height="4.100" fill="#fff"/><rect x="781.600" y="27.900" width="4.300" height="16.100" fill="#fff"/>
</g>

</svg>
</body></html>
